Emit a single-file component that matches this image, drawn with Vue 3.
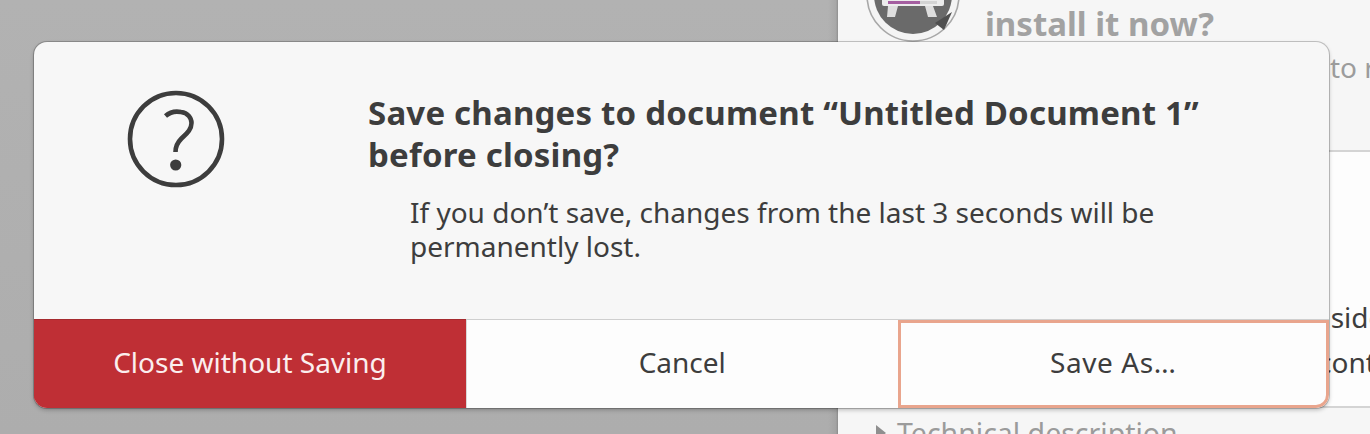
<script setup>
const buttons = [
  { label: 'Close without Saving', kind: 'danger' },
  { label: 'Cancel', kind: 'plain' },
  { label: 'Save As…', kind: 'focus' }
]
</script>

<template>
  <div class="page">
    <div class="backdrop"></div>
    <section class="panel">
      <header class="app-head">
        <svg class="app-icon" viewBox="0 0 94 94" aria-hidden="true">
          <circle cx="47" cy="47" r="46" fill="#f4f4f4" stroke="#a8a8a8" stroke-width="1.6" />
          <circle cx="47" cy="47" r="39" fill="#6a6a6a" />
          <path d="M86 64 L78 82 L69 75 Z" fill="#4f4f4f" />
          <rect x="16" y="50" width="62" height="8" rx="2" fill="#ececec" />
          <rect x="22" y="53" width="32" height="3" fill="#a45ea0" />
          <rect x="54" y="53" width="17" height="3" fill="#d4d4d4" />
          <path d="M22 58h10l-3 11h-8zM59 58h8l4 11h-9z" fill="#dedede" />
        </svg>
        <h1 class="app-title">install it now?</h1>
      </header>
      <p class="app-lead">to run</p>
      <div class="card">
        <p class="card-line first">consider</p>
        <p class="card-line second">content</p>
      </div>
      <div class="expander"><span class="arrow"></span>Technical description</div>
    </section>

    <div class="dialog" role="alertdialog">
      <div class="dialog-body">
        <svg class="question" viewBox="0 0 100 100" aria-hidden="true">
          <circle cx="50" cy="50" r="46" fill="none" stroke="#3d3d3d" stroke-width="4.6" />
          <path d="M39.5 27C44 23 50 22 55 23C62 24 65.5 29 65.5 34C65.5 41 60 45 55 50C51 54 49.5 58 49.5 63" fill="none" stroke="#3d3d3d" stroke-width="4.6" />
          <circle cx="49.7" cy="76" r="5.6" fill="#3d3d3d" />
        </svg>
        <div class="message">
          <h2 class="heading">Save changes to document “Untitled Document 1” before closing?</h2>
          <p class="detail">If you don’t save, changes from the last 3 seconds will be permanently lost.</p>
        </div>
      </div>
      <div class="actions">
        <button v-for="b in buttons" :key="b.label" class="action" :class="b.kind" type="button">{{ b.label }}</button>
      </div>
    </div>
  </div>
</template>

<style>
html, body { margin: 0; background: #b0b0b0; }
</style>

<style scoped>
.page {
  position: relative;
  display: flex;
  width: 1370px;
  height: 434px;
  overflow: hidden;
  font-family: "Noto Sans", "Open Sans", sans-serif;
  color: #3d3d3d;
}
.backdrop {
  width: 838px;
  flex: none;
  background:
    linear-gradient(90deg, rgba(0,0,0,0) 0, rgba(0,0,0,0) 828px, rgba(0,0,0,.06) 836px, rgba(0,0,0,.2) 838px),
    linear-gradient(180deg, #b2b2b2, #adadad);
}
.panel {
  flex: 1;
  min-width: 0;
  background: #f6f6f6;
  display: flex;
  flex-direction: column;
  overflow: hidden;
}
.app-head {
  height: 43px;
  display: flex;
  padding-left: 28px;
  flex: none;
}
.app-icon {
  width: 94px;
  height: 94px;
  margin-top: -52px;
  flex: none;
}
.app-title {
  margin: 0 0 0 25px;
  font-size: 33px;
  line-height: 48px;
  font-weight: 700;
  color: #a2a2a2;
  white-space: nowrap;
}
.app-lead {
  margin: 0;
  height: 107px;
  flex: none;
  padding: 6px 0 0 492px;
  box-sizing: border-box;
  font-size: 28px;
  line-height: 36px;
  color: #9c9c9c;
  white-space: nowrap;
}
.card {
  height: 258px;
  flex: none;
  background: #fdfdfd;
  border-top: 2px solid #d4d4d4;
  border-bottom: 2px solid #d4d4d4;
  box-sizing: border-box;
  font-size: 28px;
  line-height: 45px;
  white-space: nowrap;
}
.card-line { margin: 0; }
.card-line.first { padding: 143px 0 0 445px; }
.card-line.second { padding-left: 480px; }
.expander {
  display: flex;
  align-items: center;
  gap: 11px;
  padding: 7px 0 0 38px;
  font-size: 28.5px;
  line-height: 36px;
  color: #9b9b9b;
  white-space: nowrap;
}
.arrow {
  flex: none;
  border-left: 10px solid #8f8f8f;
  border-top: 8px solid transparent;
  border-bottom: 8px solid transparent;
}

.dialog {
  position: absolute;
  left: 34px;
  top: 42px;
  width: 1295px;
  height: 366px;
  border-radius: 13px;
  background: #f7f7f7;
  box-shadow: 0 0 0 1px rgba(0, 0, 0, .2), 0 2px 4px rgba(0, 0, 0, .25);
  display: flex;
  flex-direction: column;
  overflow: hidden;
}
.dialog-body {
  flex: 1;
  display: flex;
  padding: 47px 0 0 92px;
  box-sizing: border-box;
}
.question {
  width: 100px;
  height: 100px;
  flex: none;
}
.message {
  margin-left: 142px;
  width: 850px;
}
.heading {
  margin: 3px 0 0;
  font-size: 33px;
  line-height: 42px;
  font-weight: 700;
  letter-spacing: .2px;
  color: #3d3d3d;
}
.detail {
  margin: 20px 0 0 42px;
  width: 780px;
  font-size: 28px;
  line-height: 33.5px;
  color: #3d3d3d;
}
.actions {
  height: 89px;
  flex: none;
  display: grid;
  grid-template-columns: 432px 1fr 1fr;
  border-top: 1px solid #cfcfcf;
  box-sizing: border-box;
}
.action {
  margin: 0;
  padding: 0 0 4px;
  border: 0;
  background: #fdfdfd;
  color: #3d3d3d;
  font: inherit;
  font-size: 28px;
  border-left: 1px solid #d8d8d8;
  box-sizing: border-box;
}
.action.danger {
  background: #bf2f35;
  color: #fbeeee;
  border-left: 0;
  box-shadow: 0 -1px 0 #a52a2f;
}
.action.focus {
  border: 3px solid #e9a58d;
  border-bottom-right-radius: 13px;
  padding-bottom: 4px;
  letter-spacing: .6px;
}
</style>
